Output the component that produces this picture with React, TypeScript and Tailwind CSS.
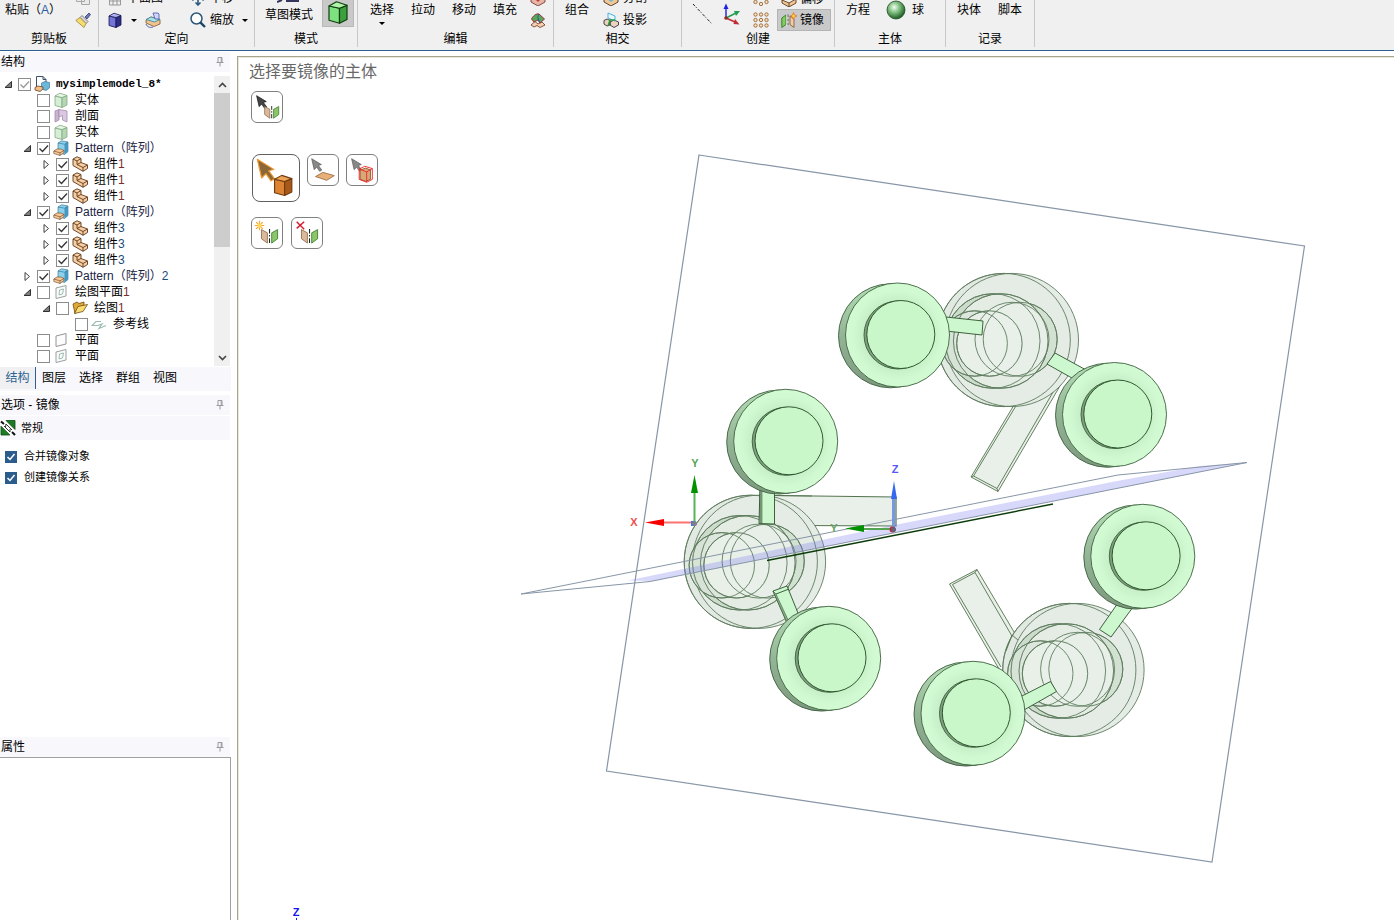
import { useState, type ReactNode } from 'react'

type NodeKind = 'root' | 'solid' | 'section' | 'pattern' | 'part' | 'sketchPlane' | 'folder' | 'curve' | 'plane'

interface TreeNode {
    id: number
    level: number
    kind: NodeKind
    label: string
    suffix?: string
    checked?: boolean
    open?: boolean
}

const TREE: TreeNode[] = [
    { id: 1, level: 0, kind: 'root', label: 'mysimplemodel_8*', checked: true, open: true },
    { id: 2, level: 1, kind: 'solid', label: '实体' },
    { id: 3, level: 1, kind: 'section', label: '剖面' },
    { id: 4, level: 1, kind: 'solid', label: '实体' },
    { id: 5, level: 1, kind: 'pattern', label: 'Pattern（阵列）', checked: true, open: true },
    { id: 6, level: 2, kind: 'part', label: '组件', suffix: '1', checked: true, open: false },
    { id: 7, level: 2, kind: 'part', label: '组件', suffix: '1', checked: true, open: false },
    { id: 8, level: 2, kind: 'part', label: '组件', suffix: '1', checked: true, open: false },
    { id: 9, level: 1, kind: 'pattern', label: 'Pattern（阵列）', checked: true, open: true },
    { id: 10, level: 2, kind: 'part', label: '组件', suffix: '3', checked: true, open: false },
    { id: 11, level: 2, kind: 'part', label: '组件', suffix: '3', checked: true, open: false },
    { id: 12, level: 2, kind: 'part', label: '组件', suffix: '3', checked: true, open: false },
    { id: 13, level: 1, kind: 'pattern', label: 'Pattern（阵列）', suffix: '2', checked: true, open: false },
    { id: 14, level: 1, kind: 'sketchPlane', label: '绘图平面', suffix: '1', open: true },
    { id: 15, level: 2, kind: 'folder', label: '绘图', suffix: '1', open: true },
    { id: 16, level: 3, kind: 'curve', label: '参考线' },
    { id: 17, level: 1, kind: 'plane', label: '平面' },
    { id: 18, level: 1, kind: 'sketchPlane', label: '平面' },
]

const INDENT = ['pl-[4px]', 'pl-[23px]', 'pl-[42px]', 'pl-[61px]']

const TABS = ['结构', '图层', '选择', '群组', '视图']

/* ---------- icons ---------- */

const Icon = ({ children, size = 'size-4' }: { children: ReactNode; size?: string }) => (
    <svg viewBox="0 0 16 16" className={`${size} shrink-0`} aria-hidden="true">
        {children}
    </svg>
)

const Cube = ({ front, side, top, line }: { front: string; side: string; top: string; line: string }) => (
    <g stroke={line} strokeWidth="0.8" strokeLinejoin="round">
        <path d="M2 4 9 5.5V15.5L2 13.5Z" fill={front} />
        <path d="M9 5.5 14 3.5V13L9 15.5Z" fill={side} />
        <path d="M2 4 7 1.2 14 3.5 9 5.5Z" fill={top} />
    </g>
)

const PatternShape = () => (
    <g strokeWidth="0.6" strokeLinejoin="round">
        <path d="M5 3 8.500 0.800 15 2V11.500L11.500 14.500 5 12.500Z" fill="#8cd2ec" stroke="#2c6c8c" />
        <path d="M11.500 4.200 15 2V11.500L11.500 14.500Z" fill="#4798c0" />
        <path d="M5 3 11.500 4.200 15 2" fill="none" stroke="#2c6c8c" />
        <path d="M0.800 11 4 9H8L11 10.5V12.5L7 15.5 0.800 13.5Z" fill="#f4c898" stroke="#6d4120" />
        <path d="M0.800 11 7 12.8 11 10.5M7 12.8V15.5" fill="none" stroke="#6d4120" />
    </g>
)

const MirrorPlanes = () => (
    <g strokeLinejoin="round" strokeWidth="0.8">
        <path d="M0.500 2.500 6 5.500V15L0.500 11Z" fill="#dcb99a" stroke="#8a6a4c" />
        <path d="M15.500 2.500 10 5.500V15L15.500 11Z" fill="#8cc66a" stroke="#3d7a2c" />
        <path d="M8 2V6M8 7.500V9M8 10.500V15" stroke="#222" strokeWidth="1" />
    </g>
)

const Cursor = ({ fill, line }: { fill: string; line: string }) => (
    <path d="M1 1 12.500 8 9 9 13 14.500 10.500 16 7 11 4 14Z" fill={fill} stroke={line} strokeWidth="0.8" strokeLinejoin="round" />
)

const NodeIcon = ({ kind }: { kind: NodeKind }) => {
    switch (kind) {
        case 'root':
            return (
                <Icon>
                    <path d="M2.500 0.5H9L12 3.5V13H2.500Z" fill="#fff" stroke="#3c5068" />
                    <path d="M9 0.5V3.5H12" fill="none" stroke="#3c5068" />
                    <path d="M7.500 7 11 5.5 15.5 6.5V12L12 14.5 7.500 13Z" fill="#6cb8dc" stroke="#2c6c8c" strokeWidth="0.6" />
                    <path d="M1 11.5 4 10 9 11V13L6 15.5 1 14Z" fill="#f0bf8c" stroke="#6d4120" strokeWidth="0.8" />
                </Icon>
            )
        case 'solid':
            return <Icon><Cube front="#d5efd5" side="#b5d6b5" top="#e6f7e6" line="#83a883" /></Icon>
        case 'section':
            return (
                <Icon>
                    <path d="M2 3 6 1.5V12L2 14Z" fill="#c9b3d0" stroke="#a58bb0" strokeWidth="0.8" />
                    <path d="M6 1.5 14 3V14L9.500 12V7.500L6 9Z" fill="#d9c8e0" stroke="#a58bb0" strokeWidth="0.8" />
                </Icon>
            )
        case 'pattern':
            return <Icon><PatternShape /></Icon>
        case 'part':
            return (
                <Icon>
                    <g fill="#f8cfa2" stroke="#5c381c" strokeWidth="0.9" strokeLinejoin="round">
                        <path d="M1 3 5 0.8 9 2.5V6.5L15.5 9V12.5L11 15.3 1 9.5Z" />
                        <path d="M1 3 5 5V8.5L11 11.5 15.5 9M11 11.5V15.3M5 5 9 2.5M5 8.5 9 6.5" fill="none" />
                    </g>
                </Icon>
            )
        case 'sketchPlane':
            return (
                <Icon>
                    <path d="M3 4 13 1.5V12L3 14.5Z" fill="#fafcfb" stroke="#98a0a0" />
                    <path d="M6.5 6 10.5 5 9.5 10 6 11Z" fill="none" stroke="#9cbcb0" />
                </Icon>
            )
        case 'plane':
            return <Icon><path d="M3 4 13 1.5V12L3 14.5Z" fill="#fcfcfc" stroke="#949494" /></Icon>
        case 'folder':
            return (
                <Icon>
                    <path d="M1 4 5 2 7 3.5 12 2V6L3 13.5Z" fill="#e0a838" stroke="#6d4a10" strokeWidth="0.8" />
                    <path d="M2.5 13.5 6 6.5 15.5 4.5 11 11.5Z" fill="#fbdc72" stroke="#6d4a10" strokeWidth="0.8" />
                </Icon>
            )
        case 'curve':
            return (
                <Icon>
                    <path d="M10 5.500 5 5.500 1 9.500 7 9.500 11 8 8 12.500 15 9.500" fill="none" stroke="#9cbcae" strokeWidth="1.200" />
                </Icon>
            )
    }
}

const Caret = () => <span className="mx-1 border-x-[3px] border-t-[3px] border-x-transparent border-t-black" />

const Pin = () => (
    <svg viewBox="0 0 8 10" className="h-[10px] w-2" fill="none" stroke="#9a9a9a" aria-hidden="true">
        <path d="M2 0.5H6V5.5H2ZM0.5 5.5H7.5M4 5.5V9.5M5.2 1V5" />
    </svg>
)

/* ---------- ribbon ---------- */

const Group = ({ title, width, children }: { title: string; width: string; children: ReactNode }) => (
    <section className={`${width} flex h-[47px] shrink-0 flex-col border-r border-[#c8c8c8]`}>
        <div className="flex h-[31px] items-end overflow-hidden">{children}</div>
        <h2 className="flex h-4 items-center justify-center leading-4">{title}</h2>
    </section>
)

const BigButton = ({ label, arrow }: { label: ReactNode; arrow?: boolean }) => (
    <button className="flex h-[31px] shrink-0 flex-col items-center gap-[2px] whitespace-nowrap leading-5">
        {label}
        {arrow && <Caret />}
    </button>
)

// two rows of small commands, the upper one is scrolled partly out of the ribbon
const Stack = ({ children }: { children: ReactNode }) => <div className="flex flex-col">{children}</div>

const SmallButton = ({ name, label, arrow, children }: { name?: string; label?: string; arrow?: boolean; children?: ReactNode }) => (
    <button aria-label={name} className="flex h-[22px] items-center gap-1 whitespace-nowrap">
        {children}
        {label}
        {arrow && <Caret />}
    </button>
)

const Ribbon = () => (
    <header className="flex h-[51px] shrink-0 overflow-hidden border-b border-[#2c6293] bg-[#f0f0f0]">
        <Group title="剪贴板" width="w-[99px]">
            <div className="flex items-end pl-[5px]">
                <BigButton label={<span>粘贴（<span className="text-[#2b5fa5]">A</span>）</span>} />
            </div>
            <div className="ml-auto pr-[7px]">
                <Stack>
                    <SmallButton name="复制">
                        <Icon>
                            <path d="M1.5 5.5H9.5V11.5H1.5ZM6.5 8.5H14.5V14.5H6.5Z" fill="#e9e9e9" stroke="#a8a8a8" />
                        </Icon>
                    </SmallButton>
                    <SmallButton name="格式刷">
                        <Icon>
                            <path d="M10 5 14 1 15.5 2.5 12 7Z" fill="#6878b8" stroke="#34406c" strokeWidth="0.8" />
                            <path d="M7 3.500 13 9.500 11 11.5 5 5.500Z" fill="#d8d8e0" stroke="#666" strokeWidth="0.8" />
                            <path d="M5 5.500 11 11.5 9 15.500 0.8 8.5Z" fill="#f4dc70" stroke="#a08838" strokeWidth="0.8" />
                        </Icon>
                    </SmallButton>
                </Stack>
            </div>
        </Group>

        <Group title="定向" width="w-[156px]">
            <div className="flex w-full justify-between pr-[2px] pl-2">
                <Stack>
                    <SmallButton label="平面图">
                        <Icon>
                            <path d="M2.5 2.5H13.5V15H2.5ZM6 2.5V15M10 2.5V15M2.5 7H13.5M2.5 11H13.5" fill="none" stroke="#989898" />
                        </Icon>
                    </SmallButton>
                    <div className="flex gap-1">
                        <SmallButton name="主视图" arrow>
                            <Icon><Cube front="#7474d8" side="#2c2c84" top="#b4b4f4" line="#14144c" /></Icon>
                        </SmallButton>
                        <SmallButton name="转向">
                            <Icon>
                                <path d="M1 8 6 5 15 7.5V12L9 14.5 1 11Z" fill="#f0c490" stroke="#7c5430" strokeWidth="0.8" />
                                <path d="M1 7.5 6 5 15 7.5 9.5 10Z" fill="#a8e4e8" stroke="#3c7c90" strokeWidth="0.8" />
                                <path d="M8 1H13L14 2V7H10L9 4Z" fill="#cfd4f8" stroke="#4854a8" strokeWidth="0.8" />
                                <path d="M1 12C2 15 5 16 8 15" fill="none" stroke="#5860a8" />
                            </Icon>
                        </SmallButton>
                    </div>
                </Stack>
                <Stack>
                    <SmallButton label="平移">
                        <Icon>
                            <path d="M8 1V15M1 8H15M5.5 12.5 8 15 10.5 12.5M3.5 5.5 1 8 3.5 10.5M12.5 5.5 15 8 12.5 10.5" fill="none" stroke="#2a5a80" strokeWidth="1.6" />
                        </Icon>
                    </SmallButton>
                    <SmallButton label="缩放" arrow>
                        <Icon>
                            <circle cx="6.5" cy="6.5" r="5.500" fill="#fff" stroke="#2c5878" strokeWidth="1.5" />
                            <path d="M10.3 10.3 15 15" stroke="#1c4464" strokeWidth="2.4" />
                        </Icon>
                    </SmallButton>
                </Stack>
            </div>
        </Group>

        <Group title="模式" width="w-[103px]">
            <div className="flex w-full items-start justify-between pr-[3px] pl-[10px]">
                <button className="flex h-[31px] flex-col items-center leading-5 whitespace-nowrap">
                    <svg viewBox="0 0 24 5" className="h-[5px] w-6 shrink-0" aria-hidden="true">
                        <path d="M0 2 5 0M9 1H22" fill="none" stroke="#34345c" strokeWidth="2" />
                    </svg>
                    草图模式
                </button>
                <button aria-label="实体模式" className="flex h-[27px] w-8 items-start justify-center border border-t-0 border-[#b8b8b8] bg-[#c9c9c9]">
                    <Icon size="size-6"><Cube front="#7fe07f" side="#3ca03c" top="#b0f4a8" line="#103c10" /></Icon>
                </button>
            </div>
        </Group>

        <Group title="编辑" width="w-[196px]">
            <div className="flex w-full items-end gap-[17px] pl-3">
                <BigButton label="选择" arrow />
                <BigButton label="拉动" />
                <BigButton label="移动" />
                <BigButton label="填充" />
            </div>
            <div className="pr-[7px]">
                <Stack>
                    <SmallButton name="抽壳">
                        <Icon>
                            <path d="M1 8 8 5 15 8V12L8 16 1 12Z" fill="#e8b4a4" stroke="#743c34" strokeWidth="0.9" />
                            <path d="M5 9H11L8 12Z" fill="#c03c3c" />
                        </Icon>
                    </SmallButton>
                    <SmallButton name="混合">
                        <Icon>
                            <path d="M1 13 5 9.5 8 12 12 10 15 13 10 15.5 7 13.5 4 15Z" fill="#f4d0b0" stroke="#7c4828" strokeWidth="0.9" />
                            <path d="M1.5 7C4 2 8 1.5 9 2L14.5 7 10 11 8 8 4 10Z" fill="#54a858" stroke="#a03040" strokeWidth="1" />
                            <path d="M9 2C7 4 8 7 10 11" fill="none" stroke="#2858a0" />
                        </Icon>
                    </SmallButton>
                </Stack>
            </div>
        </Group>

        <Group title="相交" width="w-[128px]">
            <div className="flex w-full items-end gap-[14px] pl-[11px]">
                <BigButton label="组合" />
                <Stack>
                    <SmallButton label="分割">
                        <Icon>
                            <path d="M1 9 8 6 15 9V12L8 16 1 12Z" fill="#f0c898" stroke="#4c3018" strokeWidth="0.9" />
                            <path d="M4 9 8 7.5 12 9 8 12Z" fill="#74b8d4" />
                        </Icon>
                    </SmallButton>
                    <SmallButton label="投影">
                        <Icon>
                            <path d="M1 8.500 4 7 7 8.500V13L4 14 1 12ZM7 10 11 8 15.5 10V13L11 15.500 7 13Z" fill="#ecd4bc" stroke="#34303c" strokeWidth="0.9" />
                            <path d="M5 1 12 4V9L5 6Z" fill="#e8f8ff" stroke="#38a8d8" strokeWidth="0.9" />
                            <path d="M5 14 7 8 12 8" fill="none" stroke="#289c3c" strokeWidth="1.4" />
                        </Icon>
                    </SmallButton>
                </Stack>
            </div>
        </Group>

        <Group title="创建" width="w-[153px]">
            <div className="flex w-full items-end justify-between pr-[3px] pl-2">
                <button aria-label="轴" className="h-[31px]">
                    <svg viewBox="0 0 24 31" className="h-[31px] w-6">
                        <path d="M3 4 22 24" stroke="#222" strokeDasharray="3 1.5 1 1.5" />
                    </svg>
                </button>
                <button aria-label="原点" className="h-[31px]">
                    <svg viewBox="0 0 20 31" className="h-[31px] w-5">
                        <path d="M4 18V8" stroke="#2020e0" strokeWidth="1.4" />
                        <path d="M1.5 9 4 3.5 6.5 9Z" fill="#2020e0" />
                        <path d="M4 18 14 13" stroke="#20a050" strokeWidth="1.4" />
                        <path d="M12 11 18 11 14 16Z" fill="#20a050" />
                        <path d="M4 18 13 22" stroke="#c02c34" strokeWidth="1.4" />
                        <path d="M13 19 17.5 24.5 11.5 24Z" fill="#c02c34" />
                        <circle cx="4" cy="18" r="1.8" fill="#902c24" />
                    </svg>
                </button>
                <div className="pl-1">
                    <Stack>
                        <SmallButton name="圆形阵列">
                            <Icon>
                                <g fill="#fbe0b8" stroke="#94683c" strokeWidth="0.9">
                                    <circle cx="2.5" cy="12" r="1.7" />
                                    <circle cx="8" cy="14" r="1.7" />
                                    <circle cx="13.5" cy="12" r="1.7" />
                                </g>
                            </Icon>
                        </SmallButton>
                        <SmallButton name="线性阵列">
                            <Icon>
                                <g fill="#fbe0b8" stroke="#94683c" strokeWidth="0.9">
                                    {[2.5, 8, 13.5].map(y => [2.5, 8, 13.5].map(x => <circle key={`${x}-${y}`} cx={x} cy={y} r="1.7" />))}
                                </g>
                            </Icon>
                        </SmallButton>
                    </Stack>
                </div>
                <div className="flex flex-col">
                    <button className="flex h-5 items-center gap-[3px] pl-1">
                        <Icon><path d="M1 9 7 6 15 8V12L8 16 1 12ZM1 9 8 12 15 8M8 12V16" fill="#f0c898" stroke="#5c3818" strokeWidth="0.9" /></Icon>
                        偏移
                    </button>
                    <button className="flex h-[22px] w-[54px] items-center gap-[3px] border border-[#b4b4b4] bg-[#c9c9c9] pl-[3px]">
                        <Icon>
                            <path d="M0.800 6 5 3V12.500L0.800 15.500Z" fill="#84cc60" stroke="#347828" strokeWidth="0.9" />
                            <path d="M6.500 3V14" stroke="#fff" strokeWidth="2" />
                            <path d="M7 2.500V13.500" stroke="#444" strokeDasharray="3 1" />
                            <path d="M9 4 13 7V15.500L9 12.500Z" fill="#f0cca8" stroke="#84603c" strokeWidth="0.9" />
                            <path d="M12.5 0.5 13.5 3 16 4 13.5 5 12.5 7.5 11.5 5 9.5 4 11.5 3Z" fill="#ffd040" stroke="#e06820" strokeWidth="0.7" />
                        </Icon>
                        镜像
                    </button>
                </div>
            </div>
        </Group>

        <Group title="主体" width="w-[111px]">
            <div className="flex items-end gap-4 pl-[11px]">
                <BigButton label="方程" />
                <button className="flex h-[31px] items-start gap-[6px] leading-5">
                    <svg viewBox="0 0 20 20" className="size-5">
                        <defs>
                            <radialGradient id="ball" cx="0.4" cy="0.35" r="0.65">
                                <stop offset="0" stopColor="#f0fff0" />
                                <stop offset="0.5" stopColor="#78b878" />
                                <stop offset="1" stopColor="#1c5c24" />
                            </radialGradient>
                        </defs>
                        <circle cx="10" cy="10" r="9" fill="url(#ball)" stroke="#1c4c20" strokeWidth="0.8" />
                    </svg>
                    球
                </button>
            </div>
        </Group>

        <Group title="记录" width="w-[89px]">
            <div className="flex items-end gap-[17px] pl-[11px]">
                <BigButton label="块体" />
                <BigButton label="脚本" />
            </div>
        </Group>
    </header>
)

/* ---------- left panels ---------- */

const PanelTitle = ({ children }: { children: ReactNode }) => (
    <div className="flex h-5 shrink-0 items-center justify-between bg-[#f7f7fc] pr-[6px] pl-px">
        <h2>{children}</h2>
        <button aria-label="固定"><Pin /></button>
    </div>
)

const TreeRow = ({ node, checked, onToggle }: { node: TreeNode; checked: boolean; onToggle: () => void }) => (
    <li className={`${INDENT[node.level]} flex h-4 items-center`}>
        <span className="flex w-[14px] shrink-0 items-center">
            {node.open !== undefined && (
                <svg viewBox="0 0 9 9" className="size-[9px]" aria-hidden="true">
                    {node.open
                        ? <path d="M1 7.5 7.5 1.5V7.5Z" fill="#808080" stroke="#303030" />
                        : <path d="M2 0.5 6.5 4.5 2 8.5Z" fill="#fff" stroke="#404040" />}
                </svg>
            )}
        </span>
        <label className="flex items-center">
            <span className="relative flex size-[13px]">
                <input
                    type="checkbox"
                    checked={checked}
                    onChange={onToggle}
                    className="size-[13px] appearance-none border border-[#8c8c8c] bg-white"
                />
                {checked && (
                    <svg viewBox="0 0 13 13" className="pointer-events-none absolute inset-0" fill="none" aria-hidden="true">
                        <path d="M2.5 6.5 5.5 9.5 11 3.5" stroke={node.level === 0 ? '#999' : '#333'} strokeWidth="1.3" />
                    </svg>
                )}
            </span>
            <span className="flex w-[25px] pl-[3px]"><NodeIcon kind={node.kind} /></span>
            {node.kind === 'root' ? (
                <span className="font-['Liberation_Mono',monospace] text-[11px] font-bold">{node.label}</span>
            ) : (
                <span className={`whitespace-nowrap leading-4 ${node.kind === 'pattern' ? 'text-[#1c2444]' : ''}`}>
                    {node.label}
                    {node.suffix && (
                        <span className={node.suffix === '1' ? 'text-[#7c2c2c]' : 'text-[#1c4c78]'}>{node.suffix}</span>
                    )}
                </span>
            )}
        </label>
    </li>
)

const Sidebar = () => {
    const [visible, setVisible] = useState(() => new Set(TREE.filter(n => n.checked).map(n => n.id)))
    const [tab, setTab] = useState('结构')
    const [merge, setMerge] = useState(true)
    const [relate, setRelate] = useState(true)

    const toggle = (id: number) => {
        const next = new Set(visible)
        if (next.has(id)) next.delete(id)
        else next.add(id)
        setVisible(next)
    }

    const options = [
        { label: '合并镜像对象', value: merge, set: setMerge },
        { label: '创建镜像关系', value: relate, set: setRelate },
    ]

    return (
        <aside className="flex w-[231px] shrink-0 flex-col pt-px">
            <div className="mr-px"><PanelTitle>结构</PanelTitle></div>

            <div className="mt-1 mr-px flex h-[290px] shrink-0 overflow-hidden">
                <ul className="min-w-0 flex-1">
                    {TREE.map(node => (
                        <TreeRow key={node.id} node={node} checked={visible.has(node.id)} onToggle={() => toggle(node.id)} />
                    ))}
                </ul>
                <div className="flex w-4 flex-col bg-[#f0f0f0]">
                    <button aria-label="向上滚动" className="flex h-[17px] items-center justify-center">
                        <svg viewBox="0 0 9 6" className="h-[6px] w-[9px]"><path d="M1 5 4.5 1.5 8 5" fill="none" stroke="#444" strokeWidth="1.6" /></svg>
                    </button>
                    <div className="h-[154px] bg-[#cdcdcd]" />
                    <button aria-label="向下滚动" className="mt-auto flex h-[17px] items-center justify-center">
                        <svg viewBox="0 0 9 6" className="h-[6px] w-[9px]"><path d="M1 1 4.5 4.5 8 1" fill="none" stroke="#444" strokeWidth="1.6" /></svg>
                    </button>
                </div>
            </div>

            <nav className="mt-px flex h-6 shrink-0 bg-[#f7f7fc]">
                {TABS.map(name => (
                    <button
                        key={name}
                        onClick={() => setTab(name)}
                        className={`h-[22px] border-r text-center ${tab === name ? 'w-9 border-[#2c6293] bg-[#f0f0f2] text-[#2c6293]' : 'w-[37px] border-transparent'}`}
                    >
                        {name}
                    </button>
                ))}
            </nav>

            <div className="mt-1 mr-px"><PanelTitle>选项 - 镜像</PanelTitle></div>
            <div className="mt-px mr-px flex h-6 shrink-0 items-center gap-[5px] bg-[#f7f7fc] text-[11px]">
                <Icon>
                    <path d="M1 1H15V15H1Z" fill="#fff" />
                    <path d="M6 0.500H15V9.500ZM1 6V15H10Z" fill="#1c7c24" stroke="#0c4c14" strokeWidth="0.8" />
                    <path d="M3 4 12.500 13.500" stroke="#fff" strokeWidth="5" />
                    <path d="M1 1.500 4 4M12 12 15 15" stroke="#111" strokeWidth="2" />
                    <path d="M6 4 12 10M4 6 10 12M5.500 7 6 4M10 12 10 9" fill="none" stroke="#333" />
                </Icon>
                常规
            </div>
            <div className="h-[297px] shrink-0 pt-[6px] text-[11px]">
                {options.map(opt => (
                    <label key={opt.label} className="flex h-[21px] items-center gap-[7px] pl-[5px]">
                        <span className="relative flex size-3">
                            <input
                                type="checkbox"
                                checked={opt.value}
                                onChange={e => opt.set(e.target.checked)}
                                className="size-3 appearance-none border border-[#2c5c8c] checked:bg-[#2c5c8c]"
                            />
                            <svg viewBox="0 0 12 12" className="pointer-events-none absolute inset-0" fill="none" aria-hidden="true">
                                <path d="M2.5 6 5 8.5 9.5 3" stroke="#fff" strokeWidth="1.5" />
                            </svg>
                        </span>
                        {opt.label}
                    </label>
                ))}
            </div>

            <div className="mr-px"><PanelTitle>属性</PanelTitle></div>
            <div className="flex-1 border-t border-r border-[#a0a0a0]" />
        </aside>
    )
}

/* ---------- model ---------- */

const DISCS = [
    { x: 897.5, y: 335, arm: '946,317 983,321 982,335 946,331' },
    { x: 1114.5, y: 414.5, arm: '1055,353 1088,371 1079,382 1047,364' },
    { x: 785.7, y: 441.3, arm: '760,486 774.5,486 774.5,524 759,523.5' },
    { x: 828.7, y: 658.3, arm: '773,591 787,586 800,618 788,625' },
    { x: 1142.8, y: 556.3, arm: '1120,600 1136,603 1111,637 1099.5,629.5' },
    { x: 973, y: 713.3, arm: '1020,697 1050.5,681.5 1056.5,691.5 1024,710' },
]

const HUBS = [
    { x: 1003.7, y: 340 },
    { x: 750.8, y: 561.8 },
    { x: 1069.3, y: 670 },
]

const Hub = ({ x, y }: { x: number; y: number }) => (
    <g transform={`translate(${x} ${y})`} fill="none" stroke="#5f7d5f" strokeWidth="0.9">
        <circle r="66.6" fill="#e2e8e2" />
        <circle cx="8.2" r="66.6" fill="#e5ebe5" />
        <circle r="66.6" />
        <circle cx="-11" cy="1" r="47.3" fill="#cddbcd" />
        <circle cx="16.5" cy="-0.7" r="37" fill="#d3e1d3" />
        <circle cx="-3" cy="1" r="47.3" fill="#e4ece4" />
        <circle cx="-29" cy="3.5" r="32.7" fill="#d9e5d9" fillOpacity="0.8" />
        <circle cx="-14.3" cy="3.5" r="32.7" fill="#e8f0e8" />
        <circle cx="8.3" cy="-0.7" r="37" fill="#e8f0e8" fillOpacity="0.8" />
        <circle cx="16.5" cy="-0.7" r="37" />
        <circle cx="-3" cy="1" r="47.3" />
        <circle cx="-11" cy="1" r="47.3" />
        <circle cx="-29" cy="3.5" r="32.7" />
        <circle cx="-14.3" cy="3.5" r="32.7" />
    </g>
)

const Disc = ({ x, y }: { x: number; y: number }) => (
    <g transform={`translate(${x} ${y})`} stroke="#3c603c" strokeWidth="0.9">
        <circle cx="-7" cy="0.8" r="52" fill="url(#rim)" />
        <circle r="52" fill="url(#face)" />
        <circle cx="0.5" r="34" fill="#7fa07f" />
        <circle cx="3.3" cy="-0.5" r="34" fill="#c9f7ca" stroke="#204820" />
    </g>
)

const Model = () => (
    <svg
        viewBox="239 58 1155 862"
        preserveAspectRatio="xMinYMin slice"
        className="absolute inset-0 size-full"
        fontFamily="'Liberation Sans', sans-serif"
        fontWeight="bold"
        role="img"
        aria-label="模型"
    >
        <defs>
            <radialGradient id="face">
                <stop offset="0.65" stopColor="#c6efc8" />
                <stop offset="0.85" stopColor="#d0f9d2" />
                <stop offset="1" stopColor="#d2fbd4" />
            </radialGradient>
            <linearGradient id="rim" x1="0" y1="0" x2="0" y2="1">
                <stop offset="0" stopColor="#b4dcb6" />
                <stop offset="0.5" stopColor="#94b496" />
                <stop offset="1" stopColor="#7c987e" />
            </linearGradient>
        </defs>

        <path d="M699 155 1304.5 246 1212 862 606.5 771Z" fill="none" stroke="#8796a6" strokeWidth="1.2" />

        <g fill="#e9f0e9" stroke="#54744f" strokeWidth="0.9">
            <path d="M1014 405 971 477 998 491.5 1067 374 1050 360" />
            <path d="M1016.500 405 973.5 476 997 488.5 1063 375M971 477 973.5 476M998 491.5 997 488.5" fill="none" />
            <path d="M1020 642 977 569.5 949.5 584 999 669" />
            <path d="M1016 643 975 572.5 952.5 584.5 1001 667M977 569.5 975 572.5" fill="none" />
            <path d="M774 495.5 896 497V526L800 525.500" strokeWidth="1.2" />
        </g>

        {HUBS.map(h => <Hub key={h.x} {...h} />)}
        <path d="M774 495.500 812 496M1006 651 1012 635 1018 640" fill="none" stroke="#54744f" strokeWidth="0.9" />

        {/* mirror plane seen nearly edge-on */}
        <path d="M628 580.5 892 525.5 1117 481 1200 466 1247 462.5 653 581Z" fill="#7474f0" fillOpacity="0.28" />
        <path d="M521 594 1118 475 1247 462.5 650 581.5Z" fill="none" stroke="#8796a6" />
        <path d="M767 560.5 1053 504" stroke="#0c3c0c" strokeWidth="1.4" />

        <g fill="#cdf7ce" stroke="#2c502c" strokeWidth="0.9">
            {DISCS.map(d => <polygon key={d.arm} points={d.arm} />)}
            <path d="M760 486V523.5L762 523.5V486ZM773 591 776 594 790 624 788 625Z" fill="#8cac8c" strokeWidth="0.5" />
            <path d="M776 594 789 589" />
        </g>
        {DISCS.map(d => <Disc key={d.x} x={d.x} y={d.y} />)}

        <g strokeWidth="2">
            <path d="M694.5 522V490" stroke="#54b454" />
            <path d="M694.5 475 698 493H691Z" fill="#009000" />
            <path d="M692 522.5H662" stroke="#ff7070" />
            <path d="M645 522.5 664 519V526Z" fill="#f80000" />
            <path d="M691 521H695V526H691Z" fill="#3878f0" />
            <circle cx="694.5" cy="523.5" r="2.5" fill="#808088" />

            <path d="M893.5 528V497" stroke="#7898e0" strokeWidth="3" />
            <path d="M894 481 897 499H891Z" fill="#3468f0" />
            <path d="M892 529H862" stroke="#54a454" />
            <path d="M845 528.5 864 525V532Z" fill="#009000" />
            <circle cx="892.5" cy="529.5" r="3" fill="#d02030" />
            <circle cx="893.5" cy="529.5" r="2.5" fill="#606078" />
        </g>
        <g fontSize="11" textAnchor="middle">
            <text x="695" y="467" fill="#54a454">Y</text>
            <text x="634" y="526" fill="#f05050">X</text>
            <text x="895" y="473" fill="#5858f8">Z</text>
            <text x="834" y="532" fill="#64a464">Y</text>
            <text x="296" y="916" fill="#1414f0">Z</text>
        </g>
        <path d="M296.5 918V920" stroke="#1414f0" />
    </svg>
)

const ToolButton = ({ name, active, children }: { name: string; active?: boolean; children: ReactNode }) => (
    <button
        aria-label={name}
        className={`flex shrink-0 items-center justify-center border bg-white ${active ? 'size-12 rounded-lg border-[#606060]' : 'size-8 rounded-md border-[#808080]'}`}
    >
        <svg viewBox="0 0 32 32" className="size-full">{children}</svg>
    </button>
)

const Viewport = () => (
    <main className="ml-[6px] mt-[5px] flex min-w-0 flex-1 border-t border-l border-[#a4a490]">
        <div className="relative min-w-0 flex-1 border-t border-l border-[#ece9d8] bg-white">
            <Model />
            <div className="relative flex w-fit flex-col items-start pt-1 pl-[10px]">
                <p className="text-base leading-5 text-[#686868]">选择要镜像的主体</p>
                <div className="mt-[9px] ml-[2px] flex">
                    <ToolButton name="选择主体">
                        <g transform="translate(4 3) scale(.9)"><Cursor fill="#444" line="#111" /></g>
                        <g transform="translate(13 13)"><MirrorPlanes /></g>
                    </ToolButton>
                </div>
                <div className="mt-[31px] ml-[3px] flex items-start gap-[7px]">
                    <ToolButton name="选择实体" active>
                        <g transform="translate(2 2)"><Cursor fill="#8c6838" line="#f09830" /></g>
                        <g transform="translate(13 13) scale(1 .98)"><Cube front="#dc8434" side="#a85818" top="#f0a458" line="#703c10" /></g>
                    </ToolButton>
                    <ToolButton name="选择平面">
                        <g transform="translate(3 3) scale(.9)"><Cursor fill="#888" line="#555" /></g>
                        <path d="M8 23 16 18.5 28 22 20 27Z" fill="#e8b078" stroke="#8c5c30" strokeWidth="0.8" />
                    </ToolButton>
                    <ToolButton name="选择面">
                        <g transform="translate(4 3) scale(.9)"><Cursor fill="#888" line="#555" /></g>
                        <path d="M14 16 20 14 25 16V26L20 28 14 26Z" fill="#d8a878" stroke="#8c5c30" />
                        <path d="M13 15 19 12 27 14.5V26L21 29 13 26ZM13 15 21 18 27 14.5M21 18V29" fill="none" stroke="#f02828" />
                    </ToolButton>
                </div>
                <div className="mt-[15px] ml-[2px] flex gap-2">
                    <ToolButton name="新建镜像">
                        <path d="M8 3V13M3 8H13M4.5 4.5 11.5 11.5M11.5 4.5 4.5 11.5" stroke="#f0a030" strokeWidth="1.2" />
                        <circle cx="8" cy="8" r="2.3" fill="#ffd850" />
                        <g transform="translate(9.5 9.5) scale(1.15)"><MirrorPlanes /></g>
                    </ToolButton>
                    <ToolButton name="删除镜像">
                        <path d="M5 4 13 12M13 4 5 11" stroke="#d82030" strokeWidth="1.6" />
                        <g transform="translate(9.5 9.5) scale(1.15)"><MirrorPlanes /></g>
                    </ToolButton>
                </div>
            </div>
        </div>
    </main>
)

export default function App() {
    return (
        <div className="flex min-h-screen flex-col bg-white font-['Liberation_Sans','Noto_Sans_CJK_SC',sans-serif] text-xs text-black">
            <Ribbon />
            <div className="flex flex-1">
                <Sidebar />
                <Viewport />
            </div>
        </div>
    )
}
